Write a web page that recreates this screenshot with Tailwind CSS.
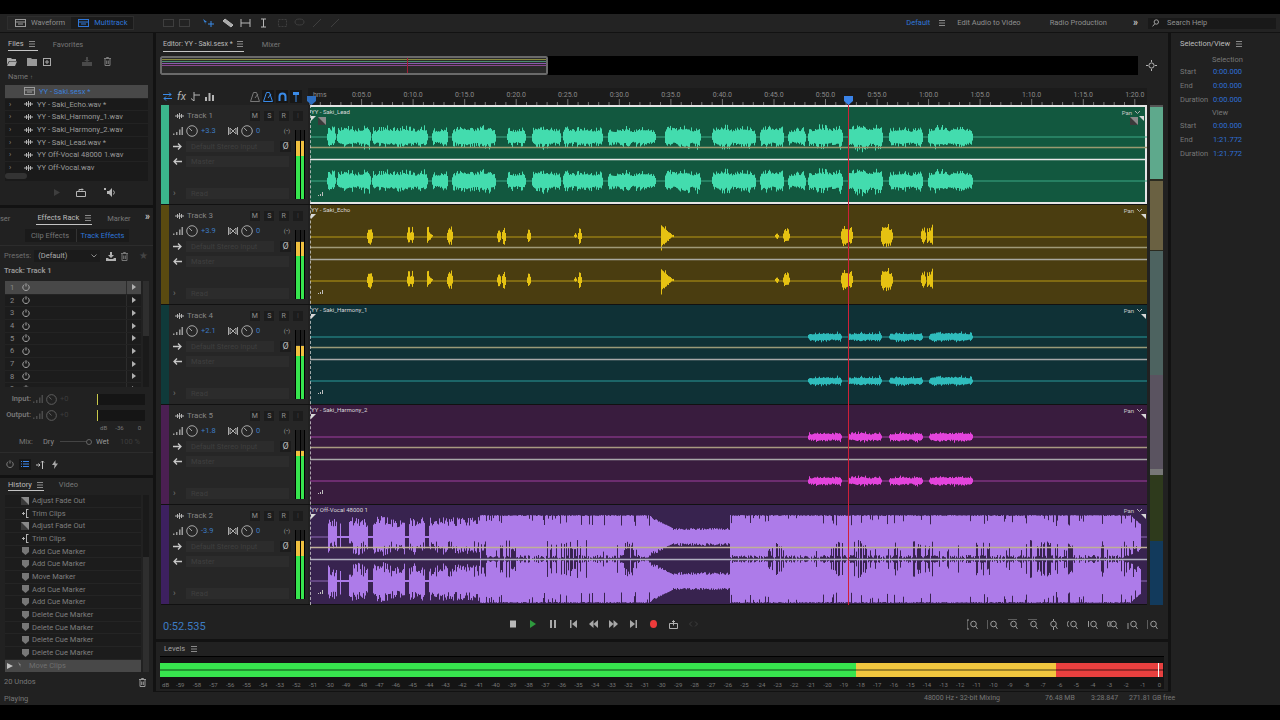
<!DOCTYPE html>
<html lang="en">
<head>
  <meta charset="UTF-8" />
  <title>Audition Multitrack</title>
  <script src="https://cdn.jsdelivr.net/npm/@tailwindcss/browser@4"></script>
</head>
<body class="bg-black">
<div class="w-[1280px] h-[720px] overflow-hidden bg-black flex flex-col font-['Roboto',sans-serif] text-[7.5px] text-[#8f8f8f] leading-none">
  <div class="h-[14px] shrink-0"></div>

  <!-- top toolbar -->
  <div class="h-[18px] shrink-0 bg-[#232323] flex items-center relative">
    <div class="ml-[7px] flex items-center h-[14px] border border-[#2e2e2e] bg-[#262626]">
      <div class="flex items-center gap-[5px] pl-[7px] pr-[6px] h-full" id="tbWave"></div>
      <div class="flex items-center gap-[5px] pl-[7px] pr-[5px] h-full bg-[#1b1b1b] text-[#2f76d8]" id="tbMulti"></div>
    </div>
    <div id="tools" class="ml-[29px] flex items-center h-full"></div>
    <div class="ml-auto flex items-center h-full">
      <span class="text-[#2f76d8]">Default</span>
      <span class="ml-[9px] text-[#2f76d8]" data-icon="menu"></span>
      <span class="ml-[12px]">Edit Audio to Video</span>
      <span class="ml-[29px]">Radio Production</span>
      <span class="ml-[26px] text-[#c4c4c4] text-[10px] font-bold">»</span>
      <div class="ml-[10px] mr-[4px] w-[128px] h-[11px] bg-[#191919] flex items-center pl-[4px] gap-[8px]">
        <svg width="7" height="8" viewBox="0 0 7 8" fill="none" stroke="#a0a0a0"><circle cx="4.3" cy="3" r="2.2"/><path d="M2.8 4.8L.6 7.4"/></svg>
        <span>Search Help</span>
      </div>
    </div>
  </div>

  <div class="h-[660px] shrink-0 flex bg-[#121212] pt-[1px]">
    <!-- left column -->
    <div class="w-[153px] shrink-0 flex flex-col gap-[3px]">
      <section class="h-[172px] bg-[#212121] flex flex-col">
        <div class="h-[18px] flex items-end pl-[8px] relative">
          <div class="flex items-center gap-[5px] pb-[3px] pr-[3px] border-b border-[#c4c4c4] text-[#bcbcbc]"><span>Files</span><span data-icon="menu"></span></div>
          <span class="ml-[15px] pb-[3px] text-[#777]">Favorites</span>
        </div>
        <div class="h-[21px] flex items-center pl-[7px] gap-[9px] text-[#a8a8a8]" id="fileIcons"></div>
        <div class="h-[10px] pl-[8px] flex items-center gap-[2px] text-[#777]">Name <span class="text-[6px]">↑</span></div>
        <div class="mx-[5px] mt-[3px] bg-[#1a1a1a] h-[96px] relative" id="fileList">
          <div class="absolute left-0 bottom-[2px] w-[22px] h-[6px] rounded-full bg-[#333]"></div>
        </div>
        <div class="flex-1 flex items-center justify-center gap-[16px] pl-[16px] pb-[1px]" id="fileFoot"></div>
      </section>

      <section class="h-[267px] bg-[#212121] flex flex-col">
        <div class="h-[17px] flex items-end relative">
          <span class="pb-[3px] text-[#777]">ser</span>
          <div class="ml-[26px] flex items-center gap-[6px] pb-[3px] pr-[1px] pl-[1px] border-b border-[#c4c4c4] text-[#bcbcbc]"><span>Effects Rack</span><span data-icon="menu"></span></div>
          <span class="ml-[15px] pb-[3px] text-[#777]">Marker</span>
          <span class="ml-auto mr-[3px] pb-[3px] text-[#c4c4c4] text-[10px] font-bold">»</span>
        </div>
        <div class="mt-[4px] mx-auto flex h-[13px] w-[104px] bg-[#1a1a1a]">
          <div class="w-[52px] flex items-center justify-center text-[#777] border-r border-[#333]">Clip Effects</div>
          <div class="flex-1 flex items-center justify-center text-[#2f76d8]">Track Effects</div>
        </div>
        <div class="mt-[3px] h-[1px] bg-[#2c2c2c]"></div>
        <div class="h-[20px] flex items-center pl-[4px] text-[#6f6f6f]">
          <span>Presets:</span>
          <div class="ml-[3px] w-[66px] h-[12px] bg-[#1b1b1b] flex items-center justify-between pl-[4px] pr-[3px] text-[#aaa]"><span>(Default)</span><span data-icon="chev"></span></div>
          <span class="ml-[6px] text-[#aaa]" data-icon="save"></span>
          <span class="ml-[5px] text-[#777]" data-icon="trash"></span>
          <span class="ml-[11px] text-[#444] text-[10px]">★</span>
        </div>
        <div class="h-[10px] pl-[4px] flex items-center text-[#9a9a9a] font-semibold">Track: Track 1</div>
        <div class="flex ml-[5px] mt-[5px] h-[106px] overflow-hidden relative">
          <div id="rack" class="w-[136px] bg-[#1c1c1c]"></div>
          <div class="ml-[2px] w-[6px] bg-[#1a1a1a]"><div class="w-[6px] h-[55px] bg-[#2e2e2e]"></div></div>
        </div>
        <div class="h-[16px] mt-[4px] flex items-center text-[#6c6c6c]" id="inRow"></div>
        <div class="h-[16px] flex items-center text-[#6c6c6c]" id="outRow"></div>
        <div class="h-[10px] flex items-center justify-end gap-[8px] pr-[12px] text-[6px] text-[#777]"><span>dB</span><span>-36</span><span class="ml-[6px]">0</span></div>
        <div class="h-[17px] flex items-center pl-[19px] text-[#777]">
          <span>Mix:</span><span class="ml-[10px] text-[#888]">Dry</span>
          <div class="ml-[6px] w-[26px] h-[1px] bg-[#444]"></div>
          <div class="w-[6px] h-[6px] rounded-full border border-[#666]"></div>
          <span class="ml-[4px] text-[#9a9a9a]">Wet</span>
          <span class="ml-[11px] text-[#3c3c3c]">100 %</span>
        </div>
        <div class="mt-[2px] h-[1px] bg-[#2c2c2c]"></div>
        <div class="flex-1 flex items-center pl-[6px] gap-[4px]" id="rackFoot"></div>
      </section>

      <section class="flex-1 bg-[#212121] flex flex-col">
        <div class="h-[13px] flex items-end pl-[8px]">
          <div class="flex items-center gap-[5px] pb-[2px] pr-[1px] border-b border-[#c4c4c4] text-[#bcbcbc]"><span>History</span><span data-icon="menu"></span></div>
          <span class="ml-[15px] pb-[3px] text-[#777]">Video</span>
        </div>
        <div class="mt-[4px] flex ml-[5px] h-[177px]">
          <div id="history" class="w-[136px] bg-[#1c1c1c] overflow-hidden"></div>
          <div class="ml-[2px] w-[6px] bg-[#1a1a1a] flex flex-col justify-end"><div class="h-[115px] bg-[#2e2e2e]"></div></div>
        </div>
        <div class="flex-1 flex items-center justify-between pl-[4px] pr-[7px] text-[#777]"><span>20 Undos</span><span class="text-[#999]" data-icon="trash"></span></div>
      </section>
    </div>

    <!-- centre column -->
    <div class="ml-[3px] w-[1012px] shrink-0 flex flex-col gap-[3px]">
      <section class="h-[606px] shrink-0 bg-[#212121] flex flex-col">
        <div class="h-[19px] shrink-0 flex items-end pl-[7px]">
          <div class="flex items-center gap-[4px] pb-[3px] pr-[1px] border-b border-[#c4c4c4] text-[#bcbcbc] text-[7px]"><span>Editor: YY - Saki.sesx *</span><span data-icon="menu"></span></div>
          <span class="ml-[18px] pb-[4px] text-[#777]">Mixer</span>
        </div>
        <div class="h-[36px] shrink-0 pl-[4px] pt-[4px] flex items-start">
          <div class="w-[978px] h-[19px] bg-black flex">
            <div class="w-[388px] h-[19px] rounded-[2px] border-2 border-[#6a6a6a] bg-[#2a2a2a] flex flex-col gap-[1px] pt-[1px] relative">
              <div class="h-[1px] bg-[#8a8a40]"></div>
              <div class="h-[1px] bg-[#4b8c70]"></div>
              <div class="h-[1px] bg-[#8a5ab0]"></div>
              <div class="h-[1px] bg-[#8a4890]"></div>
              <div class="absolute left-[245px] top-0 bottom-0 w-[1px] bg-[#a01c34]"></div>
            </div>
          </div>
          <svg class="ml-[8px] mt-[4px]" width="11" height="11" viewBox="0 0 11 11" fill="none" stroke="#b5b5b5"><circle cx="5.5" cy="5.5" r="2.6"/><path d="M5.5 0v2M5.5 9v2M0 5.5h2M9 5.5h2"/></svg>
        </div>
        <div class="h-[17px] shrink-0 flex">
          <div class="w-[152px] shrink-0 flex items-center pl-[7px]" id="trackTools"></div>
          <div class="w-[839px] bg-[#1b1b1b] relative">
            <div id="rulerLabels" class="flex h-[14px] items-center text-[7px] text-[#8a8a8a]"></div>
            <svg id="rulerTicks" class="absolute left-0 bottom-0" width="839" height="6"></svg>
          </div>
        </div>
        <div class="relative flex h-[500px] shrink-0">
          <div id="tracks" class="ml-[5px] w-[986px] flex flex-col"></div>
          <div class="ml-[3px] w-[13px] flex flex-col">
            <div class="h-[2px] bg-[#555]"></div>
            <div class="h-[72px] bg-[#5ea98c]"></div>
            <div class="h-[2px] bg-[#2b2b20]"></div>
            <div class="h-[69px] bg-[#6a6142]"></div>
            <div class="h-[1px] bg-[#2b2b20]"></div>
            <div class="h-[124px] bg-[#4d6360]"></div>
            <div class="h-[94px] bg-[#5a5360]"></div>
            <div class="h-[6px] bg-[#777]"></div>
            <div class="h-[66px] bg-[#2e3a1c]"></div>
            <div class="flex-1 bg-[#123a5c]"></div>
          </div>
          <!-- playhead and start marker lie over the tracks -->
          <div class="absolute z-10 left-[692px] top-[-8px] bottom-0 w-[1px] bg-[#d02038]"></div>
          <svg class="absolute z-10 left-[688px] top-[-9px]" width="9" height="9" viewBox="0 0 9 9"><path d="M0 0h9v5L4.5 9 0 5z" fill="#3a83e8"/></svg>
          <svg class="absolute left-[151px] top-[-9px]" width="9" height="9" viewBox="0 0 9 9"><path d="M0 0h9v5L4.5 9 0 5z" fill="#2f6fc0"/></svg>
          <div class="absolute left-[154px] top-0 bottom-0 border-l border-dashed border-[#c9c9c9]/80"></div>
        </div>
        <div class="flex-1"></div>
        <div class="h-[26px] shrink-0 flex items-center relative">
          <span class="ml-[7px] text-[11px] text-[#3d7cc4]">0:52.535</span>
          <div id="transport" class="absolute left-[347px] top-0 h-full pb-[4px] flex items-center"></div>
          <div id="zooms" class="absolute left-[806px] top-0 h-full pb-[3px] flex items-center"></div>
        </div>
      </section>

      <section class="h-[49px] shrink-0 bg-[#212121] flex flex-col">
        <div class="h-[14px] pl-[8px] flex items-center gap-[6px] text-[#a0a0a0]"><span>Levels</span><span data-icon="menu"></span></div>
        <div class="mx-[4px] h-[33px] bg-[#141414] border-t border-black flex flex-col">
          <div class="mt-[6px] h-[14px] flex relative">
            <div class="w-[696px] bg-[#37e44e]"></div><div class="w-[200px] bg-[#f0c63f]"></div><div class="w-[107px] bg-[#e8403f]"></div>
            <div class="absolute left-0 right-0 top-[6px] h-[1.500px] bg-black/35"></div>
            <div class="absolute left-[998px] top-0 bottom-0 w-[1px] bg-[#f5f5f5]"></div>
          </div>
          <div id="levelScale" class="flex mt-[5px] text-[6px] text-[#777]"></div>
        </div>
      </section>
    </div>

    <!-- right column -->
    <div class="ml-[3px] flex-1 bg-[#212121] pl-[9px] flex flex-col">
      <div class="h-[21px] flex items-center gap-[6px] text-[#bcbcbc]"><span>Selection/View</span><span data-icon="menu"></span></div>
      <div class="pl-[32px] h-[11px] flex items-center text-[#777]">Selection</div>
      <div id="selRows"></div>
      <div class="pl-[32px] h-[12px] flex items-center text-[#777]">View</div>
      <div id="viewRows"></div>
    </div>
  </div>

  <!-- status bar -->
  <div class="h-[13px] shrink-0 bg-[#212121] flex items-center pl-[4px] text-[7px] text-[#777] relative">
    <span class="text-[7.5px]">Playing</span>
    <div class="absolute left-[924px] top-0 h-full flex items-center">
      <span class="w-[121px]">48000 Hz • 32-bit Mixing</span>
      <span class="w-[46px]">76.48 MB</span>
      <span class="w-[38px]">3:28.847</span>
      <span>271.81 GB free</span>
    </div>
  </div>
</div>

<script>
  const ic = {
    menu: '<svg class="inline-block" width="6" height="6" viewBox="0 0 6 6" stroke="#8a8a8a"><path d="M0 .5h6M0 3h6M0 5.5h6"/></svg>',
    chev: '<svg class="inline-block" width="6" height="4" viewBox="0 0 6 4" fill="none" stroke="#8a8a8a"><path d="M.5.5L3 3 5.5.5"/></svg>',
    save: '<svg class="inline-block" width="10" height="9" viewBox="0 0 10 9" fill="#b0b0b0"><path d="M4 0h2v3h2L5 6 2 3h2zM0 6h2l1 1h4l1-1h2v3H0z"/></svg>',
    trash: '<svg class="inline-block" width="7" height="9" viewBox="0 0 7 9" fill="none" stroke="currentColor"><path d="M0 1.5h7M2.5 1.5V.5h2v1M1 2v6.5h5V2M2.7 3.5v3.5M4.3 3.5v3.5"/></svg>',
    wav: '<svg class="inline-block shrink-0" width="9" height="6" viewBox="0 0 9 6" stroke="#b4b4b4"><path d="M0 3h9M2.5 1v4M4.5 0v6M6.5 1v4"/></svg>',
    sess: (c) => `<svg class="inline-block shrink-0" width="11" height="8" viewBox="0 0 11 8" fill="none" stroke="${c}"><rect x=".5" y=".5" width="10" height="7"/><path d="M0 3h11M3 5h5"/></svg>`,
    power: '<svg class="inline-block" width="8" height="8" viewBox="0 0 8 8" fill="none" stroke="#a8a8a8"><path d="M2.3 1.6a3.2 3.2 0 1 0 3.4 0M4 .3v3.2"/></svg>',
    knob: (r) => `<svg class="shrink-0" width="${r}" height="${r}" viewBox="0 0 12 12" fill="none" stroke="#a5a5a5"><circle cx="6" cy="6" r="5.3"/><path d="M6 6L3 2.8"/></svg>`,
    vol: (c) => `<svg class="shrink-0" width="10" height="8" viewBox="0 0 10 8" fill="${c}"><path d="M0 6.5h1.5V8H0zM3 5h1.5v3H3zM6 2.5h1.5V8H6zM8.500 0H10v8H8.500z"/></svg>`,
    right: '<svg class="shrink-0" width="9" height="7" viewBox="0 0 9 7" fill="none" stroke="#c8c8c8" stroke-width="1.300"><path d="M0 3.500h8M5 .5l3 3-3 3"/></svg>',
    left: '<svg class="shrink-0" width="9" height="7" viewBox="0 0 9 7" fill="none" stroke="#c8c8c8" stroke-width="1.300"><path d="M9 3.500H1M4 .5l-3 3 3 3"/></svg>',
    marker: '<svg width="7" height="8" viewBox="0 0 7 8" fill="#777"><path d="M0 0h7v5L3.500 8 0 5z"/></svg>',
    fade: '<svg width="8" height="8" viewBox="0 0 8 8"><rect width="8" height="8" fill="#8a8a8a"/><path d="M0 0l8 8H0z" fill="#3a3a3a"/></svg>',
    trim: '<svg width="7" height="9" viewBox="0 0 7 9" fill="none" stroke="#b0b0b0"><path d="M4.500 0v9M4.500 .5h2M4.500 8.500h2M0 4.500h3M1.500 3v3"/></svg>'
  };
  document.querySelectorAll('[data-icon]').forEach(el => { el.innerHTML = ic[el.dataset.icon]; });

  const $ = (id) => document.getElementById(id);

  $('tbWave').innerHTML = ic.sess('#9a9a9a') + '<span>Waveform</span>';
  $('tbMulti').innerHTML = ic.sess('#2f76d8') + '<span>Multitrack</span>';

  const tool = (x, inner, dim) => `<svg class="shrink-0" style="margin-left:${x}px" width="11" height="10" viewBox="0 0 11 10" fill="none" stroke="${dim ? '#3e3e3e' : '#b8b8b8'}">${inner}</svg>`;
  $('tools').innerHTML =
    tool(0, '<rect x=".5" y="1.500" width="10" height="7"/>', true) +
    tool(5, '<rect x=".5" y="1.500" width="10" height="7"/>', true) +
    `<svg class="ml-[13px] shrink-0" width="11" height="9" viewBox="0 0 11 9"><path d="M0 0l4 3-2 .6L3 6z" fill="#3a8be8"/><path d="M5 5h6M8 2v6" stroke="#3a8be8"/></svg>` +
    tool(9, '<path d="M2 1l8 6-2 2-8-6z" fill="#aaa"/>') +
    tool(6, '<path d="M1 1v8M10 1v8M1 5h9"/>') +
    tool(7, '<path d="M3 1h5M3 9h5M5.500 1v8"/>') +
    tool(8, '<rect x="1.500" y="1.500" width="8" height="7" stroke-dasharray="2 1"/>', true) +
    tool(6, '<ellipse cx="5.500" cy="4" rx="4.500" ry="3"/>', true) +
    tool(7, '<path d="M1 9l8-8"/>', true) +
    tool(7, '<path d="M1 9l8-8"/>', true);

  $('fileIcons').innerHTML =
    '<svg width="10" height="8" viewBox="0 0 10 8" fill="#aaa"><path d="M0 0h4l1 1h4v2H2L0 7zM2.500 3.500H10L8 8H0z"/></svg>' +
    '<svg class="ml-[1px]" width="10" height="8" viewBox="0 0 10 8" fill="#999"><path d="M0 0h4l1 1h5v7H0z"/></svg>' +
    '<svg class="-ml-[3px]" width="8" height="8" viewBox="0 0 8 8" fill="none" stroke="#aaa"><rect x=".5" y=".5" width="7" height="7"/><path d="M2 4h4M4 2v4"/></svg>' +
    '<svg class="ml-[22px]" width="10" height="9" viewBox="0 0 10 9" fill="#4a4a4a"><path d="M4 0h2v3h2L5 5 2 3h2zM0 5h10v4H0z"/></svg>' +
    '<span class="ml-[3px] text-[#7c7c7c]">' + ic.trash + '</span>';

  const files = ['YY - Saki.sesx *', 'YY - Saki_Echo.wav *', 'YY - Saki_Harmony_1.wav', 'YY - Saki_Harmony_2.wav', 'YY - Saki_Lead.wav *', 'YY Off-Vocal 48000 1.wav', 'YY Off-Vocal.wav'];
  $('fileList').insertAdjacentHTML('afterbegin', files.map((f, i) => i === 0
    ? `<div class="h-[12.67px] bg-[#484848] flex items-center pl-[19px] gap-[4px] text-[#3d7fd8]">${ic.sess('#9a9a9a')}<span>${f}</span></div>`
    : `<div class="h-[12.67px] flex items-center border-t border-[#222] pl-[4px] text-[#9a9a9a]"><span class="w-[15px] text-[#888]">›</span>${ic.wav}<span class="ml-[4px]">${f}</span></div>`).join(''));

  $('fileFoot').innerHTML =
    '<svg width="6" height="7" viewBox="0 0 6 7" fill="#3e3e3e"><path d="M0 0l6 3.500L0 7z"/></svg>' +
    '<svg width="10" height="9" viewBox="0 0 10 9" fill="none" stroke="#b5b5b5"><path d="M.5 3.500h9v5h-9zM3 3.500V1.500h4l-1-1M7 1.500l-1 1"/></svg>' +
    '<svg width="14" height="9" viewBox="0 0 14 9" fill="#b5b5b5"><path d="M2 0h2v2H2zM5 3h2l3-3v9L7 6H5z"/><path d="M11.500 2.500a3 3 0 0 1 0 4" stroke="#b5b5b5" fill="none"/></svg>';

  // effects rack rows
  $('rack').innerHTML = [1,2,3,4,5,6,7,8,9].map(n => `
    <div class="h-[12.67px] flex items-center ${n === 1 ? 'bg-[#484848]' : 'border-t border-[#232323]'}">
      <span class="w-[14px] pl-[5px] text-[#8a8a8a]">${n}</span>
      <span class="w-[14px] flex justify-center">${ic.power}</span>
      <span class="flex-1 h-full border-r border-[#2c2c2c]"></span>
      <span class="w-[14px] flex justify-center"><svg width="4" height="6" viewBox="0 0 4 6" fill="#b0b0b0"><path d="M0 0l4 3-4 3z"/></svg></span>
    </div>`).join('');

  const ioRow = (label, pad) => `
    <span class="text-right text-[#777] font-semibold" style="width:${pad}px">${label}</span>
    <span class="ml-[2px] opacity-40">${ic.vol('#888')}</span>
    <span class="ml-[3px] opacity-50">${ic.knob(11)}</span>
    <span class="ml-[3px] text-[#3c3c3c]">+0</span>
    <div class="absolute left-[97px] w-[48px] h-[11px] bg-[#151515] border-l border-[#c8c84a]"></div>`;
  $('inRow').classList.add('relative'); $('outRow').classList.add('relative');
  $('inRow').innerHTML = ioRow('Input:', 31);
  $('outRow').innerHTML = ioRow('Output:', 31);

  $('rackFoot').innerHTML =
    `<span class="opacity-70">${ic.power}</span>` +
    '<span class="ml-[1px] w-[12px] h-[11px] bg-[#161616] flex items-center justify-center"><svg width="8" height="6" viewBox="0 0 8 6" stroke="#3a83e8"><path d="M2 .5h6M2 3h6M2 5.500h6M0 .5h1M0 3h1M0 5.500h1"/></svg></span>' +
    '<svg class="ml-[1px]" width="9" height="9" viewBox="0 0 9 9" fill="none" stroke="#c0c0c0"><path d="M0 5h4M2.500 3.500L4 5 2.500 6.500M6.500 9V1M5 2.500L6.500 1 8 2.500"/></svg>' +
    '<svg class="ml-[3px]" width="6" height="9" viewBox="0 0 6 9" fill="#aaa"><path d="M3.500 0L0 5h2.500L2 9l4-5.500H3.500z"/></svg>';

  // history
  const hist = [['fade','Adjust Fade Out'],['trim','Trim Clips'],['fade','Adjust Fade Out'],['trim','Trim Clips'],['marker','Add Cue Marker'],['marker','Add Cue Marker'],['marker','Move Marker'],['marker','Add Cue Marker'],['marker','Add Cue Marker'],['marker','Delete Cue Marker'],['marker','Delete Cue Marker'],['marker','Delete Cue Marker'],['marker','Delete Cue Marker']];
  $('history').innerHTML = hist.map(([i, t]) => `
    <div class="h-[12.67px] flex items-center border-b border-[#242424] pl-[13px] text-[#7e7e7e]"><span class="w-[14px] flex justify-center">${ic[i]}</span><span>${t}</span></div>`).join('') +
    `<div class="h-[12.67px] flex items-center bg-[#484848] text-[#6f6f6f] pl-[2px]"><svg width="6" height="6" viewBox="0 0 6 6" fill="#c0c0c0"><path d="M0 0l6 3-6 3z"/></svg><svg class="ml-[5px]" width="9" height="8" viewBox="0 0 9 8" fill="#999"><path d="M0 0l3 3-1 .5L3 6zM5 2v5M7 3v3"/></svg><span class="ml-[2px]">Move Clips</span></div>`;

  // timeline tools
  $('trackTools').innerHTML =
    '<svg width="9" height="9" viewBox="0 0 9 9" fill="none" stroke="#3a8be8"><path d="M0 2.500h8M6 .5l2 2-2 2M9 6.500H1M3 4.500l-2 2 2 2"/></svg>' +
    '<span class="ml-[5px] italic text-[11px] text-[#b5b5b5] font-[\'Liberation_Serif\']">fx</span>' +
    '<svg class="ml-[5px]" width="9" height="9" viewBox="0 0 9 9" fill="none" stroke="#b5b5b5"><path d="M3 0v9M0 6.500l3 2.500M5 3h4M3 3h2"/></svg>' +
    '<svg class="ml-[5px]" width="9" height="9" viewBox="0 0 9 9" fill="#b5b5b5"><path d="M0 5h2v4H0zM3.500 1h2v8h-2zM7 3h2v6H7z"/></svg>' +
    '<svg class="ml-[36px]" width="10" height="10" viewBox="0 0 10 10" fill="none" stroke="#777"><path d="M3.500 .5h3L9.500 9.500H.5zM5 6L8 2"/></svg>' +
    '<span class="ml-[2px] w-[12px] h-[13px] bg-[#171717] flex items-center justify-center"><svg width="10" height="10" viewBox="0 0 10 10" fill="none" stroke="#3a8be8"><path d="M3.500 .5h3L9.500 9.500H.5zM5 6L8 2"/></svg></span>' +
    '<span class="ml-[2px] w-[12px] h-[13px] bg-[#171717] flex items-center justify-center"><svg width="9" height="9" viewBox="0 0 9 9" fill="none" stroke="#3a8be8" stroke-width="2"><path d="M1.500 9V4.500a3 3 0 0 1 6 0V9"/></svg></span>' +
    '<span class="ml-[2px] w-[12px] h-[13px] bg-[#171717] flex items-center justify-center"><svg width="6" height="10" viewBox="0 0 6 10" fill="#3a8be8"><path d="M0 0h6v3H3.500v7h-1V3H0z"/></svg></span>';

  // ruler
  const labels = ['0:05.0','0:10.0','0:15.0','0:20.0','0:25.0','0:30.0','0:35.0','0:40.0','0:45.0','0:50.0','0:55.0','1:00.0','1:05.0','1:10.0','1:15.0','1:20.0'];
  $('rulerLabels').innerHTML = '<span class="w-[27.8px] pl-[5px] shrink-0">hms</span>' + labels.map(l => `<span class="w-[51.55px] shrink-0 text-center">${l}</span>`).join('');
  let ticks = '';
  for (let i = 0; i <= 80; i++) {
    const x = 2 + i * 10.31;
    const big = i % 5 === 0;
    ticks += `M${x.toFixed(1)} ${big ? 0 : 3}V6`;
  }
  $('rulerTicks').innerHTML = `<path d="${ticks}" stroke="#777" fill="none"/>`;

  // seeded noise so the waveforms stay the same on every load
  let seed = 7;
  const rnd = () => { seed = (seed * 16807) % 2147483647; return seed / 2147483647; };

  const clipOffset = 310;
  function wave(segs, channels) {
    let d = '';
    for (const [a, b, amp, shape] of segs) {
      for (let x = a; x <= b; x++) {
        const t = (x - a) / Math.max(1, b - a);
        let e = Math.min(1, Math.min(x - a + 1, b - x + 1) / 2);
        if (shape === 'rise') e = 0.45 + 0.55 * t * t;
        if (shape === 'decay') e = Math.max(0.1, 1 - t);
        // slow swell plus column noise, peaks only now and then
        const swell = 0.78 + 0.22 * Math.abs(Math.sin(x / 6.3));
        const up = amp * e * swell * (0.5 + 0.5 * rnd() * rnd());
        const dn = amp * e * swell * (0.5 + 0.5 * rnd() * rnd());
        for (const c of channels) {
          d += `M${x - clipOffset + 0.5} ${(c - up).toFixed(1)}V${(c + dn).toFixed(1)}`;
        }
      }
    }
    return d;
  }

  // off-vocal track is loud and clipped, so it has its own shaping
  const vocalGaps = [[337,339],[341,348],[368,372],[405,408],[425,428]];
  function denseWave(channels) {
    let d = '';
    for (let x = 328; x <= 1140; x++) {
      let top, bot;
      if (x < 480) {
        const quiet = vocalGaps.some(([a, b]) => x >= a && x <= b);
        const base = x < 400 ? 16 + Math.abs(Math.sin(x / 9)) * 5 : 20;
        top = quiet ? 1 : base * (0.55 + 0.45 * rnd());
        bot = quiet ? 1 : (rnd() < 0.3 ? 4 + 6 * rnd() : base * (0.45 + 0.45 * rnd()));
      } else if (x > 672 && x < 730) {
        top = 7 + 2 * rnd();
        bot = 6 + 3 * rnd();
      } else if (x >= 650 && x <= 672) {
        const f = 1 - (x - 650) / 22;
        top = 9 + 12 * f * (0.8 + 0.2 * rnd());
        bot = 7 + 13 * f * (0.6 + 0.4 * rnd());
      } else {
        const cluster = Math.sin(x / 11) + Math.sin(x / 4.7) > 0.5;
        top = rnd() < 0.13 ? 11 + 8 * rnd() : 21 + rnd();
        bot = rnd() < (cluster ? 0.55 : 0.08) ? 3 + 12 * rnd() : 18 + 4 * rnd();
      }
      if (x > 1130) { const f = (1140 - x) / 10 * 0.4 + 0.6; top *= f; bot *= f; }
      for (const c of channels) {
        const flip = c > 50;
        const a = flip ? bot : top, b = flip ? top : bot;
        d += `M${x - clipOffset + 0.5} ${(c - a).toFixed(1)}V${(c + b).toFixed(1)}`;
      }
    }
    return d;
  }

  const harm = [[808, 841, 6], [848, 881, 6], [889, 922, 6], [929, 972, 6.5]];
  const tracks = [
    { name: 'Track 1', vol: '+3.3', clip: 'YY - Saki_Lead', strip: 'bg-[#3bb58c]', bg: 'bg-[#12583f]', wave: '#43dcae', line: '#3aa886', gain: '#9a9a70', div: '#e8e8e8', selected: true, top: 35, yellow: 15,
      d: wave([[327,335,13],[337,370,13],[372,427,13],[432,447,12],[452,495,14],[507,525,12],[532,560,14],[563,602,13],[608,655,12],[665,700,14],[712,755,14],[760,783,14],[788,805,11],[808,842,14],[848,882,16],[889,922,13],[928,972,14]], [32, 76]) },
    { name: 'Track 3', vol: '+3.9', clip: 'YY - Saki_Echo', strip: 'bg-[#5a4a10]', bg: 'bg-[#4a3d10]', wave: '#e6c212', line: '#b89a14', gain: '#a09a78', div: '#a8a8a0', top: 36, yellow: 14,
      d: wave([[367,372,12],[407,410,12],[411,413,12],[427,432,12,'decay'],[447,452,12],[497,500,11],[502,505,11],[527,530,10],[574,576,4],[578,581,12],[661,673,19,'decay'],[775,778,4],[783,789,10],[841,852,14],[881,892,15],[921,925,11],[927,932,20,'rise']], [31, 75]) },
    { name: 'Track 4', vol: '+2.1', clip: 'YY - Saki_Harmony_1', strip: 'bg-[#0f3a3a]', bg: 'bg-[#0f3136]', wave: '#2fbcbc', line: '#2a9a9a', gain: '#9a9a78', div: '#a8a8a8', top: 40, yellow: 10,
      d: wave(harm, [32, 76]) },
    { name: 'Track 5', vol: '+1.8', clip: 'YY - Saki_Harmony_2', strip: 'bg-[#4b1f52]', bg: 'bg-[#391c3e]', wave: '#e344dc', line: '#a03fa0', gain: '#a89a80', div: '#a8a8a8', top: 45, yellow: 5,
      d: wave(harm, [32, 76]) },
    { name: 'Track 2', vol: '-3.9', clip: 'YY Off-Vocal 48000 1', strip: 'bg-[#3d2060]', bg: 'bg-[#38234f]', wave: '#ad7be9', line: '#8f6ab8', gain: '#c0b098', div: '#b0b0c0', top: 35, yellow: 15,
      d: denseWave([32, 76]) }
  ];

  const btn = (t, extra = '') => `<span class="w-[10px] h-[10px] flex items-center justify-center bg-[#1c1c1c] text-[7px] ${extra}">${t}</span>`;

  $('tracks').innerHTML = tracks.map((t) => `
    <div class="h-[100px] flex shrink-0 border-b border-[#111]">
      <div class="w-[147px] shrink-0 flex bg-[#262626]">
        <div class="w-[8px] ${t.strip}"></div>
        <div class="w-[126px] flex flex-col pl-[4px]">
          <div class="h-[10px] mt-[6px] flex items-center">
            <span class="ml-[2px] flex">${ic.wav}</span>
            <span class="ml-[3px] text-[#858585] text-[8px]">${t.name}</span>
            <div class="ml-auto flex gap-[4.400px] mr-[-8px]">${btn('M')}${btn('S')}${btn('R')}${btn('I', 'text-[#3c3c3c]')}</div>
          </div>
          <div class="h-[14px] mt-[3px] flex items-center">
            ${ic.vol('#9a9a9a')}
            <span class="ml-[3px]">${ic.knob(12)}</span>
            <span class="ml-[3px] text-[#3d7cc4] w-[14px]">${t.vol}</span>
            <span class="ml-[13px] text-[#9a9a9a]"><svg width="10" height="8" viewBox="0 0 10 8" fill="none" stroke="#aaa"><path d="M.5 0v8M9.500 0v8M2 1l3 3-3 3zM8 1L5 4l3 3z"/></svg></span>
            <span class="ml-[3px]">${ic.knob(12)}</span>
            <span class="ml-[3px] text-[#3d7cc4]">0</span>
            <span class="ml-auto mr-[5px] text-[6px] text-[#999]">(•)</span>
          </div>
          <div class="h-[13px] mt-[2px] flex items-center">
            ${ic.right}
            <div class="ml-[4px] w-[88px] h-[11px] bg-[#2c2c2c] flex items-center pl-[5px] text-[#3f3f3f]">Default Stereo Input</div>
            <span class="ml-[6px] w-[11px] h-[11px] bg-[#1c1c1c] flex items-center justify-center text-[9px] text-[#bbb]">Ø</span>
          </div>
          <div class="h-[13px] mt-[2px] flex items-center">
            ${ic.left}
            <div class="ml-[4px] w-[103px] h-[11px] bg-[#2c2c2c] flex items-center pl-[5px] text-[#3f3f3f]">Master</div>
          </div>
          <div class="h-[13px] mt-[19px] flex items-center">
            <span class="w-[13px] text-[#777] text-[9px]">›</span>
            <div class="w-[103px] h-[11px] bg-[#2c2c2c] flex items-center pl-[5px] text-[#3f3f3f]">Read</div>
          </div>
        </div>
        <div class="w-[10px] h-[69px] mt-[25px] bg-black flex gap-[1px] px-[1px]">
          ${[0, 1].map(() => `<div class="flex-1 flex flex-col">
            <div style="height:${t.top - 25}px" class="bg-[#1d1d1d]"></div>
            <div class="h-[1px] bg-[#333]"></div>
            <div style="height:${t.yellow}px" class="bg-[#f0c040]"></div>
            <div class="flex-1 bg-[#37e44e]"></div>
          </div>`).join('')}
        </div>
      </div>
      <div class="ml-[2px] w-[837px] shrink-0 relative ${t.bg} ${t.selected ? 'border-2 border-[#e4e4e4] border-l-0' : ''}">
        <svg class="absolute left-0 ${t.selected ? 'top-[-2px]' : 'top-0'}" width="837" height="100" viewBox="0 0 837 100">
          <path d="M0 32H837M0 76H837" stroke="${t.line}" fill="none"/>
          <path d="${t.d}" stroke="${t.wave}" stroke-width="1" fill="none"/>
          <path d="M0 42.500H837" stroke="${t.gain}" stroke-width="1.500" fill="none"/>
          <path d="M0 54.500H837" stroke="${t.div}" stroke-width="1.500" fill="none"/>
        </svg>
        <span class="absolute left-[1px] top-[2px] text-[6px] text-[#d8d8d8]">${t.clip}</span>
        <span class="absolute left-[8px] top-[85px] text-[#c0c0c0]"><svg width="6" height="4" viewBox="0 0 6 4" fill="#c0c0c0"><path d="M0 3h1v1H0zM2 2h1v2H2zM4 0h1v4H4z"/></svg></span>
        <span class="absolute right-[13px] top-[3px] text-[6px] text-[#c8c8c8]">Pan</span>
        <svg class="absolute right-[5px] top-[4px]" width="5" height="3" viewBox="0 0 5 3" fill="none" stroke="#b0b0b0"><path d="M0 0l2.500 2.500L5 0"/></svg>
        <svg class="absolute right-[1px] top-[9px]" width="5" height="5" viewBox="0 0 5 5" fill="#d8d8d8"><path d="M0 0h5v5z"/></svg>
        <svg class="absolute left-[1px] top-[9px]" width="5" height="5" viewBox="0 0 5 5" fill="#d8d8d8"><path d="M0 0h5L0 5z"/></svg>
        ${t.selected ? '<span class="absolute left-[8px] top-[10px]">' + ic.fade + '</span><span class="absolute right-[7px] top-[10px]">' + ic.fade + '</span>' : ''}
      </div>
    </div>`).join('');

  // transport buttons
  const tb = (inner) => `<span class="w-[20.100px] flex justify-center shrink-0">${inner}</span>`;
  const s = (w, inner) => `<svg width="${w}" height="8" viewBox="0 0 ${w} 8" fill="#a8a8a8">${inner}</svg>`;
  $('transport').innerHTML = [
    s(6, '<rect width="6" height="7" y=".5" fill="#b8b8b8"/>'),
    '<svg width="6" height="8" viewBox="0 0 6 8" fill="#2f9a3e"><path d="M0 0l6 4-6 4z"/></svg>',
    s(6, '<path d="M0 0h2v8H0zM4 0h2v8H4z"/>'),
    s(7, '<path d="M0 0h1.500v8H0zM7 0v8L2 4z"/>'),
    s(9, '<path d="M4.500 0v8L0 4zM9 0v8L4.500 4z"/>'),
    s(9, '<path d="M0 0v8l4.500-4zM4.500 0v8L9 4z"/>'),
    s(7, '<path d="M0 0v8l5-4zM5.500 0H7v8H5.500z"/>'),
    '<svg width="7" height="8" viewBox="0 0 7 8" fill="#ee3b3b"><ellipse cx="3.500" cy="4" rx="3.500" ry="4"/></svg>',
    '<svg width="9" height="9" viewBox="0 0 9 9" fill="none" stroke="#b0b0b0"><path d="M.5 3.500h8v5h-8zM4.500 5.500V.5M3 2l1.500-1.500L6 2"/></svg>',
    '<svg width="9" height="6" viewBox="0 0 9 6" fill="none" stroke="#3e3e3e"><path d="M3 .5L.5 3 3 5.500M6 .5L8.500 3 6 5.500"/></svg>'
  ].map(tb).join('');

  const zoomIcon = (pre) => `<span class="w-[20.100px] flex justify-center shrink-0"><svg width="11" height="11" viewBox="0 0 11 11" fill="none" stroke="#9a9a9a">${pre}<circle cx="6.500" cy="5" r="2.800"/><path d="M8.500 7l2 3"/></svg></span>`;
  $('zooms').innerHTML = [
    '<path d="M0 1v9M0 1h2M0 10h2"/>', '<path d="M0 1v9"/>', '<path d="M1 0h9"/>', '<path d="M1 0h9"/>', '<path d="M6.500 0v2M6.500 8v3"/>',
    '<path d="M1.500 2L0 5l1.500 3"/>', '<path d="M1.500 2v6"/>', '<path d="M1.500 2L0 5l1.500 3M3 2v6"/>', '<path d="M1 4v6"/>', '<path d="M0 1v9"/>'
  ].map(zoomIcon).join('');

  // level meter scale
  let scale = '<span class="w-[12px] pl-[2px] shrink-0">dB</span>';
  for (let n = -59; n <= 0; n++) scale += `<span class="w-[16.600px] shrink-0 text-center">${n}</span>`;
  $('levelScale').innerHTML = scale;

  const timeRow = (l, v) => `<div class="h-[14px] flex items-center text-[#777]"><span class="w-[33px]">${l}</span><span class="text-[#2f6fd6]">${v}</span></div>`;
  $('selRows').innerHTML = timeRow('Start', '0:00.000') + timeRow('End', '0:00.000') + timeRow('Duration', '0:00.000');
  $('viewRows').innerHTML = timeRow('Start', '0:00.000') + timeRow('End', '1:21.772') + timeRow('Duration', '1:21.772');
</script>
</body>
</html>
